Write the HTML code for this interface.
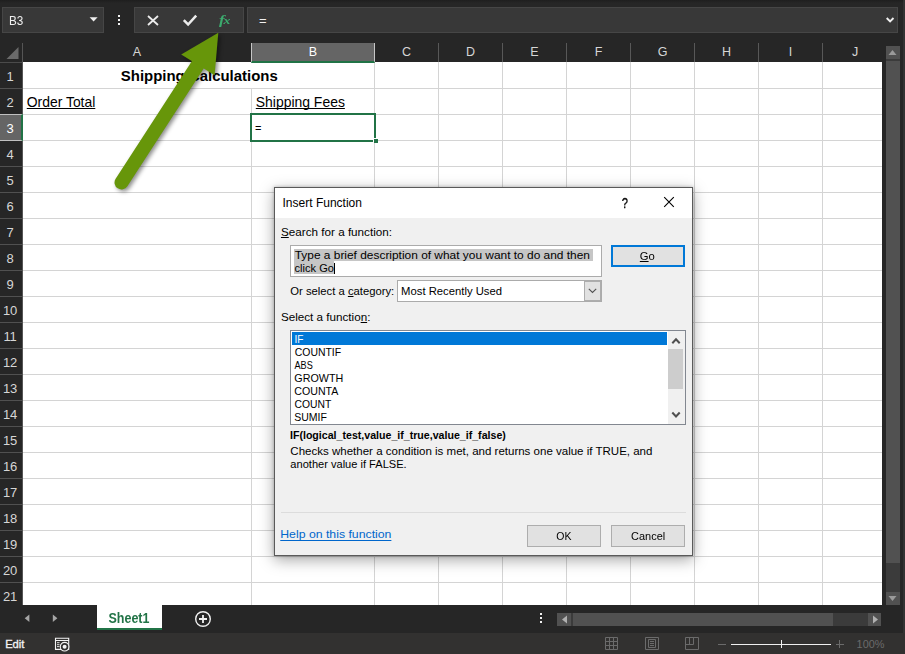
<!DOCTYPE html>
<html lang="en">
<head>
<meta charset="utf-8">
<title>Insert Function</title>
<style>
*{box-sizing:border-box;margin:0;padding:0;text-decoration-skip-ink:none}
html,body{width:905px;height:654px;overflow:hidden;background:#262626}
body{position:relative;font-family:"Liberation Sans",sans-serif;font-size:12px;color:#000}
.abs{position:absolute}
/* ---------- formula bar ---------- */
#topline{left:0;top:0;width:905px;height:3px;background:linear-gradient(#1e1e1e,#262626)}
.fbox{top:7px;height:26px;background:#383838;border:1px solid #464646}
#namebox{left:2px;width:102px}
#namebox span{position:absolute;left:6px;top:5px;font-size:13px;color:#f0f0f0;line-height:16px;transform:scaleX(.9);transform-origin:0 0}
#btnbox{left:134px;width:110px}
#fxbox{left:247px;width:651px}
#fxbox span{position:absolute;left:11px;top:5px;font-size:13px;color:#f0f0f0;line-height:16px}
/* ---------- headers ---------- */
.ch{top:43px;height:19px;color:#d6d6d6;font-size:12.5px;line-height:19px;text-align:center;border-right:1px solid #585858}
.ch.sel{background:#656565;color:#fff;height:20px;border-bottom:2px solid #217346;border-left:1px solid #c6c6c6;border-right:1px solid #c6c6c6;z-index:2}
.rh{left:0;width:20px;height:26px;color:#d6d6d6;font-size:13px;line-height:28px;text-align:center;letter-spacing:-.3px}
.rl{left:0;width:22px;height:1px;background:#505050}
.rh.sel{background:#656565;color:#fff;border-right:2px solid #217346;border-top:1px solid #c0c0c0;border-bottom:1px solid #c0c0c0;height:27px;line-height:27px;padding-right:1px;z-index:2}
#sheet{left:23px;top:62px;width:859px;height:543px;background:#fff;overflow:hidden}
.gv{top:0;width:1px;height:544px;background:#d4d4d4}
.gh{left:0;height:1px;width:859px;background:#d4d4d4}
.cell{font-size:14.6px;line-height:28px;text-underline-offset:1px;text-decoration-thickness:1px;white-space:nowrap;color:#000}
/* ---------- dialog ---------- */
#dlg{left:274px;top:187px;width:419px;height:369px;background:#f0f0f0;border:1px solid #5a5a5a;box-shadow:0 4px 14px rgba(0,0,0,.35),0 0 3px rgba(0,0,0,.25)}
#dlg .t{position:absolute;white-space:nowrap;line-height:14px;font-size:11px}
#dlg #d_title{font-size:12px}
#dlg #d_help{font-size:11.5px;text-underline-offset:1.5px;text-decoration-thickness:1px}
#dtitle{left:0;top:0;width:417px;height:30px;background:#fff}
.btn{background:#e1e1e1;border:1px solid #adadad;text-align:center;font-size:11px;line-height:19px}
u{text-decoration:underline;text-underline-offset:1px}
/*FIT-BEGIN*/
#d_title{transform:translateX(-0.54px) scaleX(1.0021);transform-origin:0 0}
#d_search{transform:translateX(-0.05px) scaleX(1.0626);transform-origin:0 0}
#d_l1{transform:translateX(-0.30px) scaleX(1.0826);transform-origin:0 0}
#d_l2{transform:translateX(-0.46px) scaleX(1.0062);transform-origin:0 0}
#d_cat{transform:translateX(0.27px) scaleX(1.0241);transform-origin:0 0}
#d_mru{transform:translateX(0.12px) scaleX(1.0255);transform-origin:0 0}
#d_self{transform:translateX(-0.11px) scaleX(1.0602);transform-origin:0 0}
#f_if{transform:translateX(0.38px) scaleX(0.9160);transform-origin:0 0}
#f_countif{transform:translateX(0.73px) scaleX(0.9497);transform-origin:0 0}
#f_abs{transform:translateX(0.50px) scaleX(0.8302);transform-origin:0 0}
#f_growth{transform:translateX(0.37px) scaleX(0.9768);transform-origin:0 0}
#f_counta{transform:translateX(0.30px) scaleX(0.9657);transform-origin:0 0}
#f_count{transform:translateX(0.51px) scaleX(0.9389);transform-origin:0 0}
#f_sumif{transform:translateX(0.18px) scaleX(0.9556);transform-origin:0 0}
#d_sig{transform:translateX(-0.03px) scaleX(0.9647);transform-origin:0 0}
#d_desc1{transform:translateX(0.37px) scaleX(1.0468);transform-origin:0 0}
#d_desc2{transform:translateX(0.34px) scaleX(1.0065);transform-origin:0 0}
#d_help{transform:translateX(-0.74px) scaleX(1.0666);transform-origin:0 0}
#b_ok{display:inline-block;transform:scaleX(0.9544);transform-origin:50% 0;position:relative;left:0.16px}
#b_cancel{display:inline-block;transform:scaleX(0.9938);transform-origin:50% 0;position:relative;left:-0.24px}
#b_go{display:inline-block;transform:scaleX(1.0242);transform-origin:50% 0;position:relative;left:-1.02px}
#c_ot{transform:translateX(0.76px) scaleX(0.9530);transform-origin:0 0}
#c_title{transform:translateX(0.78px) scaleX(1.0248);transform-origin:0 0}
#c_sf{transform:translateX(0.77px) scaleX(0.9547);transform-origin:0 0}
#s_edit{transform:translateX(0.14px) scaleX(1.0168);transform-origin:0 0}
#s_zoom{transform:translateX(-0.42px) scaleX(0.9883);transform-origin:0 0}
#s_tab{display:inline-block;transform:scaleX(0.8929);transform-origin:50% 0;position:relative;left:-0.98px}
/*FIT-END*/
</style>
</head>
<body>
<div class="abs" id="topline"></div>

<!-- name box -->
<div class="abs fbox" id="namebox"><span>B3</span>
<svg class="abs" style="left:86px;top:8px" width="10" height="8" viewBox="0 0 10 8"><path d="M0.600 1.200h8L4.600 5.600z" fill="#f0f0f0"/></svg>
</div>
<svg class="abs" style="left:117px;top:14px" width="4" height="12" viewBox="0 0 4 12"><rect x="1" y="1" width="2" height="2" fill="#f0f0f0"/><rect x="1" y="5" width="2" height="2" fill="#f0f0f0"/><rect x="1" y="9" width="2" height="2" fill="#f0f0f0"/></svg>

<!-- cancel / enter / fx -->
<div class="abs fbox" id="btnbox">
<svg class="abs" style="left:11px;top:6px" width="14" height="13" viewBox="0 0 14 13"><path d="M2 2l10 9M12 2l-10 9" stroke="#ececec" stroke-width="1.8" fill="none"/></svg>
<svg class="abs" style="left:47px;top:5px" width="16" height="14" viewBox="0 0 16 14"><path d="M1.8 7.200l4.300 4.300L14.200 2.600" stroke="#ececec" stroke-width="2.5" fill="none"/></svg>
<span class="abs" style="left:84px;top:3px;font-family:'Liberation Serif',serif;font-style:italic;font-weight:bold;font-size:13.5px;line-height:18px;color:#3cab6e;white-space:nowrap;transform:scaleX(1.25);transform-origin:0 0">f<span style="font-size:11px;position:relative;top:0px;margin-left:-1px">x</span></span>
</div>

<!-- formula input -->
<div class="abs fbox" id="fxbox"><span>=</span>
<svg class="abs" style="left:637px;top:8px" width="10" height="8" viewBox="0 0 10 8"><path d="M1.700 2l3.400 3.400 3.400-3.400" stroke="#f0f0f0" stroke-width="1.900" fill="none"/></svg>
</div>

<!-- select-all corner -->
<svg class="abs" style="left:6px;top:46px" width="14" height="14" viewBox="0 0 14 14"><path d="M12.5 1v12h-12z" fill="#6a6a6a"/></svg>
<div class="abs" style="left:0;top:62px;width:23px;height:1px;background:#4b4b4b"></div>

<!-- column headers -->
<div class="abs ch" style="left:23px;width:228px;border-right:none">A</div>
<div class="abs ch sel" style="left:251px;width:124px;line-height:18px">B</div>
<div class="abs ch" style="left:375px;width:64px">C</div>
<div class="abs ch" style="left:439px;width:64px">D</div>
<div class="abs ch" style="left:503px;width:64px">E</div>
<div class="abs ch" style="left:567px;width:64px">F</div>
<div class="abs ch" style="left:631px;width:64px">G</div>
<div class="abs ch" style="left:695px;width:64px">H</div>
<div class="abs ch" style="left:759px;width:64px">I</div>
<div class="abs ch" style="left:823px;width:64px;border-right:none">J</div>

<!-- row headers -->
<div class="abs rh" style="top:63px">1</div>
<div class="abs rh" style="top:89px">2</div>
<div class="abs rh sel" style="top:114px;width:23px">3</div>
<div class="abs rh" style="top:141px">4</div>
<div class="abs rh" style="top:167px">5</div>
<div class="abs rh" style="top:193px">6</div>
<div class="abs rh" style="top:219px">7</div>
<div class="abs rh" style="top:245px">8</div>
<div class="abs rh" style="top:271px">9</div>
<div class="abs rh" style="top:297px">10</div>
<div class="abs rh" style="top:323px">11</div>
<div class="abs rh" style="top:349px">12</div>
<div class="abs rh" style="top:375px">13</div>
<div class="abs rh" style="top:401px">14</div>
<div class="abs rh" style="top:427px">15</div>
<div class="abs rh" style="top:453px">16</div>
<div class="abs rh" style="top:479px">17</div>
<div class="abs rh" style="top:505px">18</div>
<div class="abs rh" style="top:531px">19</div>
<div class="abs rh" style="top:557px">20</div>
<div class="abs rh" style="top:583px;height:22px;overflow:hidden">21</div>

<div class="abs rl" style="top:88px"></div><div class="abs rl" style="top:114px"></div><div class="abs rl" style="top:140px"></div><div class="abs rl" style="top:166px"></div><div class="abs rl" style="top:192px"></div><div class="abs rl" style="top:218px"></div><div class="abs rl" style="top:244px"></div><div class="abs rl" style="top:270px"></div><div class="abs rl" style="top:296px"></div><div class="abs rl" style="top:322px"></div><div class="abs rl" style="top:348px"></div><div class="abs rl" style="top:374px"></div><div class="abs rl" style="top:400px"></div><div class="abs rl" style="top:426px"></div><div class="abs rl" style="top:452px"></div><div class="abs rl" style="top:478px"></div><div class="abs rl" style="top:504px"></div><div class="abs rl" style="top:530px"></div><div class="abs rl" style="top:556px"></div><div class="abs rl" style="top:582px"></div>
<div class="abs" style="left:22px;top:43px;width:1px;height:562px;background:#555"></div>
<!-- sheet -->
<div class="abs" id="sheet">
<div class="abs gh" style="top:26px"></div><div class="abs gh" style="top:52px"></div><div class="abs gh" style="top:78px"></div><div class="abs gh" style="top:104px"></div><div class="abs gh" style="top:130px"></div><div class="abs gh" style="top:156px"></div><div class="abs gh" style="top:182px"></div><div class="abs gh" style="top:208px"></div><div class="abs gh" style="top:234px"></div><div class="abs gh" style="top:260px"></div><div class="abs gh" style="top:286px"></div><div class="abs gh" style="top:312px"></div><div class="abs gh" style="top:338px"></div><div class="abs gh" style="top:364px"></div><div class="abs gh" style="top:390px"></div><div class="abs gh" style="top:416px"></div><div class="abs gh" style="top:442px"></div><div class="abs gh" style="top:468px"></div><div class="abs gh" style="top:494px"></div><div class="abs gh" style="top:520px"></div>
<div class="abs gv" style="left:228px;top:26px"></div><div class="abs gv" style="left:351px"></div><div class="abs gv" style="left:415px"></div><div class="abs gv" style="left:479px"></div><div class="abs gv" style="left:543px"></div><div class="abs gv" style="left:607px"></div><div class="abs gv" style="left:671px"></div><div class="abs gv" style="left:735px"></div><div class="abs gv" style="left:799px"></div>
<div class="abs cell" style="left:97px;top:0;font-weight:bold" id="c_title">Shipping Calculations</div>
<div class="abs cell" style="left:3px;top:26px;text-decoration:underline" id="c_ot">Order Total</div>
<div class="abs cell" style="left:232px;top:26px;text-decoration:underline" id="c_sf">Shipping Fees</div>
<div class="abs" id="selbox" style="left:227px;top:51px;width:126px;height:29px;border:2px solid #217346"></div>
<div class="abs" style="left:350px;top:76px;width:5px;height:5px;background:#217346;border-left:1px solid #fff;border-top:1px solid #fff"></div>
<div class="abs cell" style="left:232px;top:52px;font-size:11px;line-height:29px">=</div>
</div>

<!-- arrow -->
<svg class="abs" id="arrow" style="left:90px;top:20px;filter:drop-shadow(2px 2px 2px rgba(0,0,0,.45))" width="150" height="185" viewBox="90 20 150 185">
<path d="M121.5 182.5L197.5 65.3" stroke="#67960a" stroke-width="14" stroke-linecap="round" fill="none"/>
<path d="M218.3 32.8L181.2 54.5L214.6 75.2z" fill="#67960a"/>
</svg>

<!-- scrollbars -->
<div class="abs" style="left:886px;top:46px;width:14px;height:559px;background:#3b3b3b"></div>
<div class="abs" style="left:886px;top:46px;width:14px;height:13px;background:#515151"></div>
<svg class="abs" style="left:888px;top:49px" width="9" height="7" viewBox="0 0 9 7"><path d="M0.5 6h8L4.5 1z" fill="#9a9a9a"/></svg>
<div class="abs" style="left:886px;top:61px;width:14px;height:502px;background:#515151"></div>
<div class="abs" style="left:886px;top:592px;width:14px;height:13px;background:#515151"></div>
<svg class="abs" style="left:888px;top:595px" width="9" height="7" viewBox="0 0 9 7"><path d="M0.5 1h8L4.5 6z" fill="#9a9a9a"/></svg>
<div class="abs" style="left:903px;top:0;width:2px;height:654px;background:#333"></div>

<!-- tab bar -->
<svg class="abs" style="left:23px;top:613px" width="7" height="10" viewBox="0 0 7 10"><path d="M6.4 1.4v7.6L1.7 5.200z" fill="#a6a6a6"/></svg>
<svg class="abs" style="left:52px;top:613px" width="7" height="10" viewBox="0 0 7 10"><path d="M0.800 1.400v7.600l4.600-3.800z" fill="#a6a6a6"/></svg>
<div class="abs" id="tabdiv" style="left:97px;top:605px;width:65px;height:25px;background:#fff;border-bottom:2px solid #217346;text-align:center;font-weight:bold;font-size:14px;line-height:27px;color:#217346"><span id="s_tab" style="display:inline-block">Sheet1</span></div>
<svg class="abs" style="left:194px;top:610px" width="18" height="18" viewBox="0 0 18 18"><circle cx="9" cy="9" r="7.3" fill="none" stroke="#f0f0f0" stroke-width="1.4"/><path d="M9 5v8M5 9h8" stroke="#f0f0f0" stroke-width="1.8"/></svg>
<svg class="abs" style="left:539px;top:612px" width="4" height="12" viewBox="0 0 4 12"><rect x="1" y="1" width="2" height="2" fill="#f0f0f0"/><rect x="1" y="5" width="2" height="2" fill="#f0f0f0"/><rect x="1" y="9" width="2" height="2" fill="#f0f0f0"/></svg>
<div class="abs" style="left:557px;top:613px;width:324px;height:13px;background:#3b3b3b"></div>
<div class="abs" style="left:557px;top:613px;width:14px;height:13px;background:#515151"></div>
<svg class="abs" style="left:561px;top:615px" width="7" height="9" viewBox="0 0 7 9"><path d="M6 0.5v8L1 4.5z" fill="#b0b0b0"/></svg>
<div class="abs" style="left:573px;top:613px;width:260px;height:13px;background:#515151"></div>
<div class="abs" style="left:868px;top:613px;width:13px;height:13px;background:#515151"></div>
<svg class="abs" style="left:872px;top:615px" width="7" height="9" viewBox="0 0 7 9"><path d="M1 0.5v8l5-4z" fill="#b0b0b0"/></svg>

<!-- status bar -->
<div class="abs" style="left:0;top:633px;width:905px;height:21px;background:#323130"></div>
<div class="abs" id="s_edit" style="left:5px;top:637px;font-size:11px;line-height:15px;color:#f4f4f4;-webkit-text-stroke:.3px #f4f4f4">Edit</div>
<svg class="abs" style="left:54px;top:637px" width="17" height="15" viewBox="0 0 17 15"><path d="M1.500 1.200h13.200v11.200H1.500zM1.500 3.500h13.200" stroke="#f4f4f4" stroke-width="1.1" fill="none"/><path d="M3 5.700h2.500M3 7.700h2.500M3 9.600h2.500" stroke="#f4f4f4" stroke-width=".9"/><circle cx="10.600" cy="9.700" r="4.300" fill="#323130" stroke="#f4f4f4" stroke-width="1.100"/><circle cx="10.600" cy="9.700" r="2" fill="#f4f4f4"/></svg>
<svg class="abs" style="left:605px;top:637px" width="13" height="13" viewBox="0 0 13 13"><path d="M.5.5h12v12H.5zM.5 4.500h12M.5 8.500h12M4.500 .5v12M8.500 .5v12" stroke="#6b6b6b" fill="none"/></svg>
<svg class="abs" style="left:645px;top:637px" width="14" height="13" viewBox="0 0 14 13"><path d="M.5.5h13v12H.5zM3.500 2.500h7v8h-7z" stroke="#6b6b6b" fill="none"/><path d="M5 4.500h4M5 6.500h4M5 8.500h4" stroke="#6b6b6b" fill="none"/></svg>
<svg class="abs" style="left:685px;top:637px" width="14" height="13" viewBox="0 0 14 13"><path d="M.5.5h13v12H.5zM4.500 .5v7M8.500 .5v7M.5 7.500h8" stroke="#6b6b6b" fill="none"/></svg>
<div class="abs" style="left:718px;top:644px;width:8px;height:1px;background:#6b6b6b"></div>
<div class="abs" style="left:731px;top:644px;width:100px;height:1px;background:#f0f0f0"></div>
<div class="abs" style="left:781px;top:640px;width:1px;height:8px;background:#f0f0f0"></div>
<div class="abs" style="left:836px;top:644px;width:8px;height:1px;background:#6b6b6b"></div>
<div class="abs" style="left:839px;top:640px;width:1px;height:8px;background:#6b6b6b"></div>
<div class="abs" id="s_zoom" style="left:857px;top:637px;font-size:11px;line-height:15px;color:#6b6b6b">100%</div>

<!-- DIALOG -->
<div class="abs" id="dlg">
<div class="abs" id="dtitle"></div>
<span class="t" id="d_title" style="left:8px;top:8px">Insert Function</span>
<span class="t" id="d_q" style="left:346px;top:8px;font-size:14px;transform:scaleX(.8);transform-origin:50% 0;-webkit-text-stroke:.3px #000">?</span>
<svg class="abs" style="left:388px;top:8px" width="12" height="12" viewBox="0 0 12 12"><path d="M1.200 1.200l9.600 9.600M10.800 1.200L1.200 10.800" stroke="#000" stroke-width="1.1" fill="none"/></svg>

<span class="t" id="d_search" style="left:6px;top:37px"><u>S</u>earch for a function:</span>
<div class="abs" style="left:15px;top:57px;width:312px;height:32px;background:#fff;border:1px solid #ababab"></div>
<div class="abs hl" style="left:19px;top:61px;width:299px;height:12px;background:#c6c6c6"></div>
<div class="abs hl" style="left:19px;top:73px;width:40px;height:13px;background:#c6c6c6" id="d_hl2"></div>
<span class="t" id="d_l1" style="left:20px;top:61px;line-height:13px">Type a brief description of what you want to do and then</span>
<span class="t" id="d_l2" style="left:20px;top:74px;line-height:13px">click Go</span>
<div class="abs" style="left:59px;top:75px;width:1px;height:11px;background:#000" id="d_caret"></div>
<div class="abs btn" style="left:336px;top:57px;width:74px;height:22px;border:2px solid #0078d7;line-height:19px"><span id="b_go"><u>G</u>o</span></div>

<span class="t" id="d_cat" style="left:15px;top:96px">Or select a <u>c</u>ategory:</span>
<div class="abs" style="left:122px;top:92px;width:205px;height:22px;background:#fff;border:1px solid #ababab"></div>
<span class="t" id="d_mru" style="left:126px;top:96px">Most Recently Used</span>
<div class="abs" style="left:309px;top:93px;width:17px;height:20px;background:#e1e1e1;border:1px solid #adadad"></div>
<svg class="abs" style="left:313px;top:100px" width="9" height="6" viewBox="0 0 9 6"><path d="M0.8 0.8l3.7 3.7 3.7-3.7" stroke="#505050" stroke-width="1.1" fill="none"/></svg>

<span class="t" id="d_self" style="left:6px;top:122px">Select a functio<u>n</u>:</span>
<div class="abs" style="left:15px;top:142px;width:396px;height:95px;background:#fff;border:1px solid #828790"></div>
<div class="abs hl" style="left:17px;top:144px;width:375px;height:13px;background:#0078d7"></div>
<span class="t fn" id="f_if" style="left:19px;top:145px;line-height:13px;color:#fff">IF</span>
<span class="t fn" id="f_countif" style="left:19px;top:158px;line-height:13px">COUNTIF</span>
<span class="t fn" id="f_abs" style="left:19px;top:171px;line-height:13px">ABS</span>
<span class="t fn" id="f_growth" style="left:19px;top:184px;line-height:13px">GROWTH</span>
<span class="t fn" id="f_counta" style="left:19px;top:197px;line-height:13px">COUNTA</span>
<span class="t fn" id="f_count" style="left:19px;top:210px;line-height:13px">COUNT</span>
<span class="t fn" id="f_sumif" style="left:19px;top:223px;line-height:13px">SUMIF</span>
<div class="abs" style="left:393px;top:143px;width:17px;height:93px;background:#f0f0f0"></div>
<div class="abs" style="left:393px;top:161px;width:15px;height:40px;background:#cdcdcd"></div>
<svg class="abs" style="left:396px;top:149px" width="10" height="8" viewBox="0 0 10 8"><path d="M1.300 6.300l3.700-4 3.700 4" stroke="#505050" stroke-width="2" fill="none"/></svg>
<svg class="abs" style="left:396px;top:223px" width="10" height="8" viewBox="0 0 10 8"><path d="M1.300 1.500l3.700 4 3.700-4" stroke="#505050" stroke-width="2" fill="none"/></svg>

<span class="t" id="d_sig" style="left:15px;top:240px;font-weight:bold">IF(logical_test,value_if_true,value_if_false)</span>
<span class="t" id="d_desc1" style="left:15px;top:257px;line-height:13px">Checks whether a condition is met, and returns one value if TRUE, and</span>
<span class="t" id="d_desc2" style="left:15px;top:270px;line-height:13px">another value if FALSE.</span>

<div class="abs" style="left:6px;top:324px;width:405px;height:1px;background:#dcdcdc"></div>
<span class="t" id="d_help" style="left:6px;top:339px;color:#0066cc;text-decoration:underline">Help on this function</span>
<div class="abs btn" style="left:252px;top:337px;width:74px;height:22px;line-height:20px"><span id="b_ok">OK</span></div>
<div class="abs btn" style="left:336px;top:337px;width:74px;height:22px;line-height:20px"><span id="b_cancel">Cancel</span></div>
</div>
</body>
</html>
